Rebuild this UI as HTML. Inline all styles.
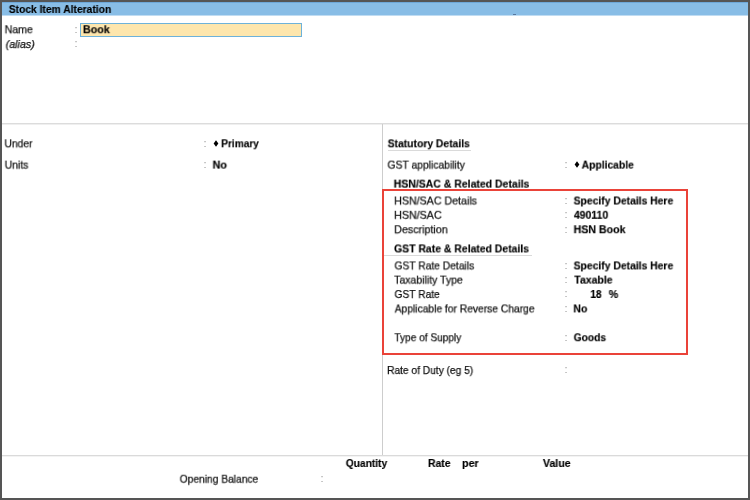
<!DOCTYPE html>
<html><head><meta charset="utf-8">
<title>Stock Item Alteration</title>
<style>
html,body{margin:0;padding:0;}
body{width:750px;height:500px;background:#fff;position:relative;overflow:hidden;font-family:"Liberation Sans",sans-serif;font-size:11px;color:#111;-webkit-text-stroke:0.25px #111;}
#txt{position:absolute;left:0;top:0;width:750px;height:500px;}
.abs{position:absolute;left:0;top:0;white-space:nowrap;line-height:14px;transform-origin:0 0;will-change:transform;}
.b{font-weight:bold;color:#000;-webkit-text-stroke:0.15px #000;}
.i{font-style:italic;}
.c{color:#9a9a9a;-webkit-text-stroke:0;}
.dm{position:absolute;}
#frame{position:absolute;left:0;top:0;width:746px;height:496px;border:2px solid #555;z-index:10;}
#title{position:absolute;left:2px;top:2px;width:746px;height:14px;background:linear-gradient(to bottom,#6ea8d9 0,#6ea8d9 1px,#88bde6 1px,#88bde6 13px,#c0dcf2 13px,#c0dcf2 14px);}
#name{position:absolute;left:80px;top:23px;width:222px;height:14px;background:#fde6ad;border:1px solid #6db2da;box-sizing:border-box;}
#red{position:absolute;left:382px;top:189px;width:306px;height:166px;border:2px solid #ea4339;box-sizing:border-box;}
.hl{position:absolute;height:1px;background:#dadada;}
.vl{position:absolute;width:1px;background:#cdcdcd;}
</style></head><body>
<div id="title"></div>
<div id="name"></div>
<div style="position:absolute;left:513px;top:14px;width:3px;height:1px;background:#56779f;"></div>
<div class="hl" style="left:2px;top:123px;width:746px;height:2px;background:linear-gradient(to bottom,#dcdcdc 0,#dcdcdc 1px,#efefef 1px,#efefef 2px);"></div>
<div class="vl" style="left:382px;top:124px;height:331px;"></div>
<div class="hl" style="left:2px;top:455px;width:746px;height:2px;background:linear-gradient(to bottom,#dadada 0,#dadada 1px,#f3f3f3 1px,#f3f3f3 2px);"></div>
<div class="hl" style="left:388px;top:150px;width:83px;"></div>
<div class="hl" style="left:384px;top:190px;width:148px;"></div>
<div class="hl" style="left:384px;top:255px;width:148px;"></div>
<div id="red"></div>
<div id="txt">
<div class="abs b" id="t_title" style="transform:translate(8.81px,2.0px) scaleX(0.9338);">Stock Item Alteration</div>
<div class="abs " id="t_name" style="transform:translate(4.70px,22.25px) scaleX(0.9572);">Name</div>
<div class="abs b" id="t_book" style="transform:translate(82.93px,22.25px) scaleX(0.9720);">Book</div>
<div class="abs i" id="t_alias" style="transform:translate(5.64px,37px) scaleX(0.9720);">(alias)</div>
<div class="abs " id="t_under" style="transform:translate(4.47px,136.3px) scaleX(0.9339);">Under</div>
<div class="abs " id="t_units" style="transform:translate(4.68px,157.6px) scaleX(0.9458);">Units</div>
<div class="abs b" id="t_primary" style="transform:translate(221.19px,136.3px) scaleX(0.9212);">Primary</div>
<div class="abs b" id="t_no1" style="transform:translate(212.59px,157.6px) scaleX(0.9720);">No</div>
<div class="abs b" id="t_stat" style="transform:translate(387.70px,136.3px) scaleX(0.9394);">Statutory Details</div>
<div class="abs " id="t_gstapp" style="transform:translate(387.47px,157.6px) scaleX(0.9405);">GST applicability</div>
<div class="abs b" id="t_applicable" style="transform:translate(581.64px,157.6px) scaleX(0.9383);">Applicable</div>
<div class="abs b" id="t_hsnhead" style="transform:translate(393.72px,176.6px) scaleX(0.9527);">HSN/SAC &amp; Related Details</div>
<div class="abs " id="t_hsndet" style="transform:translate(394.20px,193.5px) scaleX(0.9670);">HSN/SAC Details</div>
<div class="abs b" id="t_spec1" style="transform:translate(573.67px,193.5px) scaleX(0.9410);">Specify Details Here</div>
<div class="abs " id="t_hsn" style="transform:translate(394.11px,207.8px) scaleX(0.9720);">HSN/SAC</div>
<div class="abs b" id="t_490110" style="transform:translate(573.87px,207.8px) scaleX(0.9524);">490110</div>
<div class="abs " id="t_desc" style="transform:translate(394.20px,222.2px) scaleX(0.9720);">Description</div>
<div class="abs b" id="t_hsnbook" style="transform:translate(573.62px,222.2px) scaleX(0.9629);">HSN Book</div>
<div class="abs b" id="t_gsthead" style="transform:translate(394.07px,241.4px) scaleX(0.9474);">GST Rate &amp; Related Details</div>
<div class="abs " id="t_gstdet" style="transform:translate(394.47px,258.4px) scaleX(0.9329);">GST Rate Details</div>
<div class="abs b" id="t_spec2" style="transform:translate(573.67px,258.4px) scaleX(0.9410);">Specify Details Here</div>
<div class="abs " id="t_taxtype" style="transform:translate(394.20px,272.6px) scaleX(0.9536);">Taxability Type</div>
<div class="abs b" id="t_taxable" style="transform:translate(574.22px,272.6px) scaleX(0.9551);">Taxable</div>
<div class="abs " id="t_gstrate" style="transform:translate(394.50px,287px) scaleX(0.9293);">GST Rate</div>
<div class="abs b" id="t_18" style="transform:translate(590.37px,287px) scaleX(0.9180);">18</div>
<div class="abs b" id="t_pct" style="transform:translate(608.70px,287px) scaleX(0.9720);">%</div>
<div class="abs " id="t_revch" style="transform:translate(394.71px,301.4px) scaleX(0.9331);">Applicable for Reverse Charge</div>
<div class="abs b" id="t_no2" style="transform:translate(573.42px,301.4px) scaleX(0.9439);">No</div>
<div class="abs " id="t_supply" style="transform:translate(394.44px,330.2px) scaleX(0.9180);">Type of Supply</div>
<div class="abs b" id="t_goods" style="transform:translate(573.68px,330.2px) scaleX(0.9287);">Goods</div>
<div class="abs " id="t_duty" style="transform:translate(387.10px,363px) scaleX(0.9260);">Rate of Duty (eg 5)</div>
<div class="abs b" id="t_qty" style="transform:translate(345.77px,456px) scaleX(0.9283);">Quantity</div>
<div class="abs b" id="t_rate" style="transform:translate(428.01px,456px) scaleX(0.9435);">Rate</div>
<div class="abs b" id="t_per" style="transform:translate(462.02px,456px) scaleX(0.9720);">per</div>
<div class="abs b" id="t_value" style="transform:translate(542.84px,456px) scaleX(0.9720);">Value</div>
<div class="abs " id="t_opbal" style="transform:translate(179.69px,471.7px) scaleX(0.9306);">Opening Balance</div>
<div class="abs c" style="transform:translate(74.5px,21.65px);">:</div>
<div class="abs c" style="transform:translate(74.5px,36.4px);">:</div>
<div class="abs c" style="transform:translate(203.5px,135.70000000000002px);">:</div>
<div class="abs c" style="transform:translate(203.5px,157.0px);">:</div>
<div class="abs c" style="transform:translate(564.5px,157.0px);">:</div>
<div class="abs c" style="transform:translate(564.5px,192.9px);">:</div>
<div class="abs c" style="transform:translate(564.5px,207.20000000000002px);">:</div>
<div class="abs c" style="transform:translate(564.5px,221.6px);">:</div>
<div class="abs c" style="transform:translate(564.5px,257.79999999999995px);">:</div>
<div class="abs c" style="transform:translate(564.5px,272.0px);">:</div>
<div class="abs c" style="transform:translate(564.5px,286.4px);">:</div>
<div class="abs c" style="transform:translate(564.5px,300.79999999999995px);">:</div>
<div class="abs c" style="transform:translate(564.5px,329.59999999999997px);">:</div>
<div class="abs c" style="transform:translate(564.5px,362.4px);">:</div>
<div class="abs c" style="transform:translate(320.5px,471.09999999999997px);">:</div>
<svg class="dm" style="left:212.5px;top:139.9px;" width="6" height="7" viewBox="0 0 6 7"><polygon points="3,0.3 5.35,3.5 3,6.7 0.65,3.5" fill="#000"/></svg>
<svg class="dm" style="left:573.5px;top:161.1px;" width="6" height="7" viewBox="0 0 6 7"><polygon points="3,0.3 5.35,3.5 3,6.7 0.65,3.5" fill="#000"/></svg>
</div>
<div id="frame"></div>
</body></html>
